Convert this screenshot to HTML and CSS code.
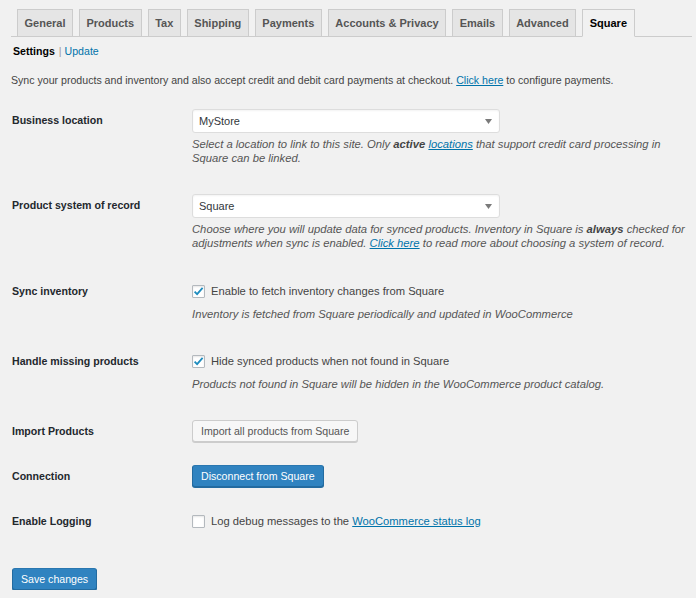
FILE: index.html
```html
<!DOCTYPE html>
<html>
<head>
    <meta charset="UTF-8">
    <title>Square Settings</title>
    <meta name="viewport" content="width=device-width, initial-scale=1.0">
    <link rel="stylesheet" href="styles.css">
</head>
<body>
    <div class="wrap">
        <nav class="nav-tabs">
            <a class="nav-tab" href="#">General</a>
            <a class="nav-tab" href="#">Products</a>
            <a class="nav-tab" href="#">Tax</a>
            <a class="nav-tab" href="#">Shipping</a>
            <a class="nav-tab" href="#">Payments</a>
            <a class="nav-tab" href="#">Accounts &amp; Privacy</a>
            <a class="nav-tab" href="#">Emails</a>
            <a class="nav-tab" href="#">Advanced</a>
            <a class="nav-tab nav-tab-active" href="#">Square</a>
        </nav>

        <ul class="subsubsub">
            <li><strong>Settings</strong></li>
            <li class="sep">|</li>
            <li><a href="#">Update</a></li>
        </ul>

        <p class="intro">Sync your products and inventory and also accept credit and debit card payments at checkout. <a href="#">Click here</a> to configure payments.</p>

        <div class="form-table">
            <div class="row row-select has-desc">
                <div class="label">Business location</div>
                <div class="field">
                    <div class="select">MyStore<svg class="arrow" width="7" height="5" viewBox="0 0 7 5"><path d="M0 0h7L3.5 5z" fill="#7a7a7a"/></svg></div>
                    <p class="description">Select a location to link to this site. Only <b>active</b> <a href="#">locations</a> that support credit card processing in Square can be linked.</p>
                </div>
            </div>

            <div class="row row-select has-desc">
                <div class="label">Product system of record</div>
                <div class="field">
                    <div class="select">Square<svg class="arrow" width="7" height="5" viewBox="0 0 7 5"><path d="M0 0h7L3.5 5z" fill="#7a7a7a"/></svg></div>
                    <p class="description">Choose where you will update data for synced products. Inventory in Square is <b>always</b> checked for adjustments when sync is enabled. <a href="#">Click here</a> to read more about choosing a system of record.</p>
                </div>
            </div>

            <div class="row row-check has-desc">
                <div class="label">Sync inventory</div>
                <div class="field">
                    <label class="check-line"><span class="checkbox"><svg width="11" height="11" viewBox="0 0 11 11"><path d="M1.6 5.6l2.5 2.6L9.6 1.9" fill="none" stroke="#1e8cbe" stroke-width="1.8"/></svg></span>Enable to fetch inventory changes from Square</label>
                    <p class="description">Inventory is fetched from Square periodically and updated in WooCommerce</p>
                </div>
            </div>

            <div class="row row-check has-desc">
                <div class="label">Handle missing products</div>
                <div class="field">
                    <label class="check-line"><span class="checkbox"><svg width="11" height="11" viewBox="0 0 11 11"><path d="M1.6 5.6l2.5 2.6L9.6 1.9" fill="none" stroke="#1e8cbe" stroke-width="1.8"/></svg></span>Hide synced products when not found in Square</label>
                    <p class="description">Products not found in Square will be hidden in the WooCommerce product catalog.</p>
                </div>
            </div>

            <div class="row row-button">
                <div class="label">Import Products</div>
                <div class="field">
                    <button class="button">Import all products from Square</button>
                </div>
            </div>

            <div class="row row-button">
                <div class="label">Connection</div>
                <div class="field">
                    <button class="button button-primary">Disconnect from Square</button>
                </div>
            </div>

            <div class="row row-check">
                <div class="label">Enable Logging</div>
                <div class="field">
                    <label class="check-line"><span class="checkbox"></span>Log debug messages to the&nbsp;<a href="#">WooCommerce status log</a></label>
                </div>
            </div>
        </div>

        <p class="submit">
            <button class="button button-primary">Save changes</button>
        </p>
    </div>
</body>
</html>
```

FILE: styles.css
```css
body {
    margin: 0;
    background-color: #f1f1f1;
    color: #444;
    font-family: "Liberation Sans", Arial, sans-serif;
    font-size: 10.6px;
}
a {
    color: #0073aa;
}
.wrap {
    margin: 0 4px 0 11px;
}

/* tabs */
.nav-tabs {
    display: flex;
    gap: 6px;
    margin-top: 9px;
    padding-left: 6px;
    border-bottom: 1px solid #ccc;
}
.nav-tab {
    display: block;
    padding: 0 6.5px;
    line-height: 26px;
    margin-bottom: -1px;
    border: 1px solid #ccc;
    background-color: #e5e5e5;
    color: #555;
    font-size: 11px;
    font-weight: bold;
    text-decoration: none;
}
.nav-tab-active {
    background-color: #f1f1f1;
    border-bottom-color: #f1f1f1;
    color: #000;
}

/* sub nav */
.subsubsub {
    display: flex;
    list-style: none;
    margin: 7px 0 0 2px;
    padding: 0;
    line-height: 14px;
}
.subsubsub strong {
    color: #000;
}
.subsubsub .sep {
    color: #999;
    margin: 0 3px 0 4px;
}
.subsubsub a {
    text-decoration: none;
}

.intro {
    margin: 15px 0 0 0;
    line-height: 14px;
}

/* settings rows */
.form-table {
    margin-top: 10px;
}
.row {
    display: grid;
    grid-template-columns: 181px 500px;
    padding: 12px 0;
}
.row-select.has-desc {
    padding-bottom: 17px;
}
.row-check {
    padding-top: 16px;
}
.row-check.has-desc {
    padding-bottom: 16px;
}
.row-button {
    padding: 13px 0 10px;
}
.label {
    padding-left: 1px;
    color: #23282d;
    font-weight: bold;
}
.row-select .label {
    line-height: 22px;
}
.row-check .label {
    line-height: 16px;
}
.row-button .label {
    line-height: 22px;
}

.select {
    position: relative;
    width: 300px;
    height: 22px;
    line-height: 22px;
    padding-left: 6px;
    border: 1px solid #ddd;
    border-radius: 3px;
    background-color: #fff;
    box-shadow: inset 0 1px 2px rgba(0, 0, 0, 0.05);
    color: #32373c;
    font-size: 11px;
}
.select .arrow {
    position: absolute;
    right: 7px;
    top: 9px;
}

.description {
    margin: 4px 0 0 0;
    line-height: 14px;
    color: #555;
    font-size: 11.25px;
    font-style: italic;
}
.description b {
    color: #444;
}

.check-line {
    display: flex;
    align-items: center;
    line-height: 16px;
    color: #444;
    font-size: 11.2px;
}
.check-line + .description {
    margin-top: 8px;
}
.checkbox {
    display: flex;
    align-items: center;
    justify-content: center;
    width: 11px;
    height: 11px;
    margin-right: 6px;
    border: 1px solid #b4b9be;
    border-radius: 1px;
    background-color: #fff;
    box-shadow: inset 0 1px 2px rgba(0, 0, 0, 0.1);
}

.button {
    height: 22px;
    padding: 0 8px;
    border: 1px solid #ccc;
    border-radius: 3px;
    background-color: #f7f7f7;
    box-shadow: 0 1px 0 #ccc;
    color: #555;
    font-family: "Liberation Sans", Arial, sans-serif;
    font-size: 10.6px;
    cursor: pointer;
}
.button-primary {
    background-color: #3083c0;
    border-color: #2a77b0 #236ba0 #236ba0;
    box-shadow: 0 1px 0 #236ba0;
    color: #fff;
}

.submit {
    margin: 27px 0 0 1px;
}
```
